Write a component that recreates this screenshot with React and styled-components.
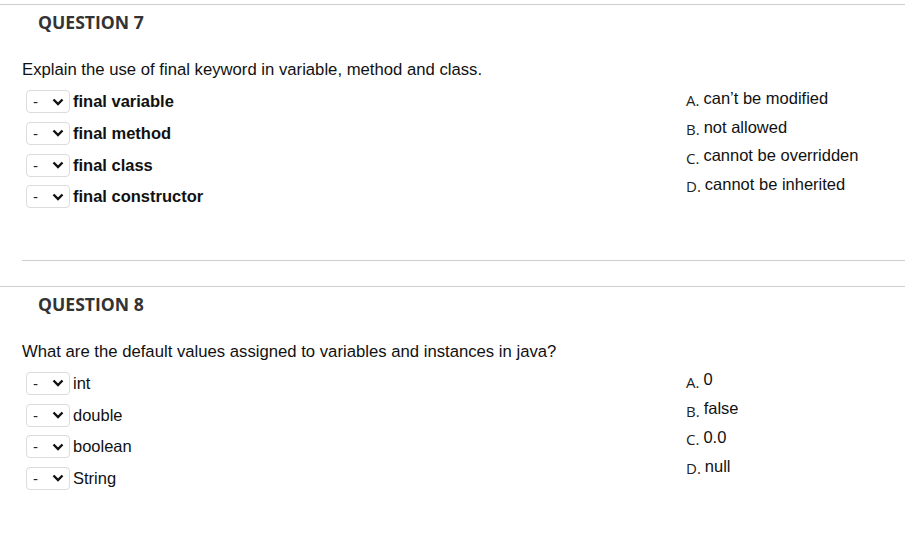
import React from "react";
import styled, { createGlobalStyle } from "styled-components";

const GlobalStyle = createGlobalStyle`
  body {
    margin: 0;
    background: #fff;
    font-family: "Liberation Sans", Arial, sans-serif;
    color: #111;
  }
`;

const Page = styled.div`
  width: 905px;
  padding-top: 4px;
`;

const Section = styled.section`
  border-top: 1px solid #cfcfcf;
  margin-bottom: ${(p) => (p.$last ? "0" : "25px")};
`;

const Heading = styled.h2`
  margin: 0;
  padding: 5px 0 0 38px;
  font-family: "Open Sans", sans-serif;
  font-weight: 700;
  font-size: 17.6px;
  line-height: 24px;
  color: #333;
`;

const Body = styled.div`
  margin-left: 22px;
  padding-bottom: ${(p) => (p.$last ? "20px" : "47px")};
  border-bottom: ${(p) => (p.$last ? "none" : "1px solid #cfcfcf")};
`;

const Prompt = styled.p`
  margin: 26px 0 6px;
  font-size: 16.7px;
  line-height: 20px;
`;

const Columns = styled.div`
  display: grid;
  grid-template-columns: 664px 1fr;
`;

const MatchList = styled.div`
  display: flex;
  flex-direction: column;
`;

const MatchRow = styled.div`
  display: flex;
  align-items: center;
  gap: 3px;
  height: 31.67px;
  padding-left: 4px;
`;

const Select = styled.div`
  box-sizing: border-box;
  width: 44px;
  height: 23px;
  border: 1px solid #dcdcdc;
  border-radius: 4px;
  display: flex;
  align-items: center;
  justify-content: space-between;
  padding: 0 5px 0 6px;
  font-size: 15px;
  color: #222;
`;

const Label = styled.span`
  font-size: 16.5px;
  font-weight: ${(p) => (p.$bold ? 700 : 400)};
  color: #111;
`;

const AnswerList = styled.div`
  display: flex;
  flex-direction: column;
  margin-top: -2px;
`;

const Answer = styled.div`
  height: 28.7px;
  display: flex;
  align-items: center;
  font-size: 16.5px;
  color: #111;
`;

const Letter = styled.span`
  font-family: "Open Sans", sans-serif;
  font-size: 15px;
  margin-right: 4px;
  position: relative;
  top: 2px;
  color: #222;
`;

const Chevron = () => (
  <svg width="12" height="8" viewBox="0 0 12 8">
    <path d="M1.5 1.5 L6 6 L10.5 1.5" fill="none" stroke="#111" strokeWidth="2.4" />
  </svg>
);

const questions = [
  {
    n: 7,
    prompt: "Explain the use of final keyword in variable, method and class.",
    bold: true,
    items: ["final variable", "final method", "final class", "final constructor"],
    answers: ["can\u2019t be modified", "not allowed", "cannot be overridden", "cannot be inherited"],
  },
  {
    n: 8,
    prompt: "What are the default values assigned to variables and instances in java?",
    bold: false,
    items: ["int", "double", "boolean", "String"],
    answers: ["0", "false", "0.0", "null"],
  },
];

export default function App() {
  return (
    <Page>
      <GlobalStyle />
      {questions.map((q, qi) => {
        const last = qi === questions.length - 1;
        return (
          <Section key={q.n} $last={last}>
            <Heading>QUESTION {q.n}</Heading>
            <Body $last={last}>
              <Prompt>{q.prompt}</Prompt>
              <Columns>
                <MatchList>
                  {q.items.map((it) => (
                    <MatchRow key={it}>
                      <Select>
                        <span>-</span>
                        <Chevron />
                      </Select>
                      <Label $bold={q.bold}>{it}</Label>
                    </MatchRow>
                  ))}
                </MatchList>
                <AnswerList>
                  {q.answers.map((a, i) => (
                    <Answer key={a}>
                      <Letter>{"ABCD"[i]}.</Letter>
                      {a}
                    </Answer>
                  ))}
                </AnswerList>
              </Columns>
            </Body>
          </Section>
        );
      })}
    </Page>
  );
}
